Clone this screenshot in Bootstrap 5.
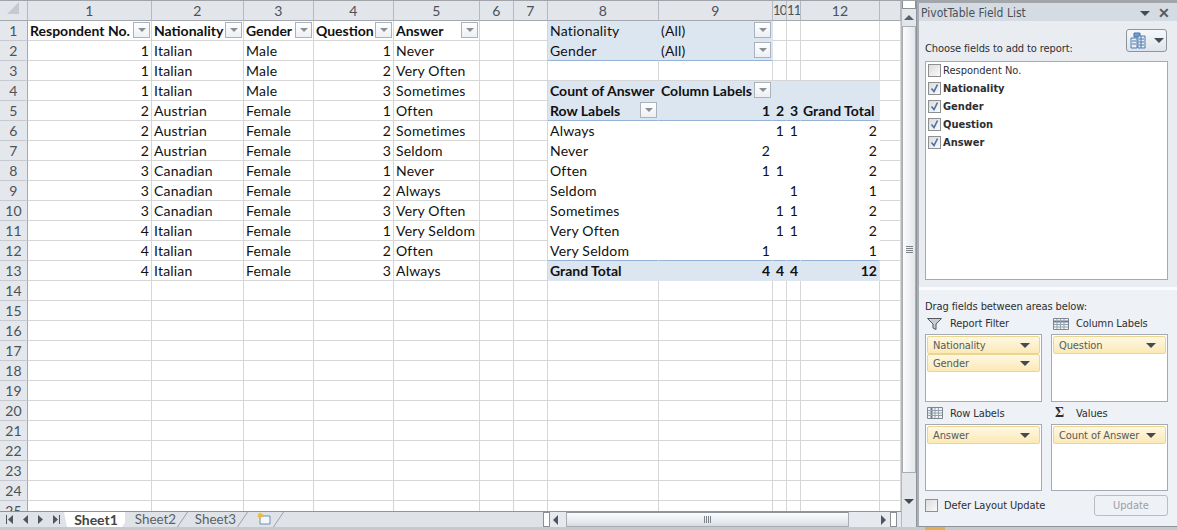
<!DOCTYPE html>
<html lang="en"><head><meta charset="utf-8"><title>PivotTable</title>
<link href="https://cdn.jsdelivr.net/npm/bootstrap@5.3.0/dist/css/bootstrap.min.css" rel="stylesheet">
<style>
html,body{width:1177px;height:530px;overflow:hidden;margin:0;background:#fff}
.xl-main{height:527px}
.xl-left{width:901px}
.xl-gridwrap{height:511px;overflow:hidden;border-top:1px solid #a0a4a8}
.xl-grid{table-layout:fixed;width:901px;border-collapse:separate;border-spacing:0;font:14px/19px Lato,"Liberation Sans",sans-serif;color:#111}
.xl-grid td,.xl-grid th{height:20px;padding:0 2px;border-right:1px solid #d6d6d6;border-bottom:1px solid #d6d6d6;overflow:hidden;white-space:nowrap;vertical-align:top;letter-spacing:.2px}
.xl-grid td.fw-bold{letter-spacing:0}
.xl-grid thead th{height:20px;background:#e2e5ea;border-right-color:#b6bac0;border-bottom-color:#a4a9b0;color:#4b525a;font-weight:400;text-align:center}
.xl-grid thead th.hd-tight{padding:0;font-size:13px;letter-spacing:-.8px}
.xl-grid tbody th{background:#e4e7ec;border-right-color:#a4a9b0;border-bottom-color:#c6cad0;color:#4b525a;font-weight:400;text-align:center}
.xl-grid td.pv-blue{background:#dce6f1;border-color:#dce6f1}
.xl-grid td.pv-plain{border-color:#fff}
.xl-grid td.pv-line{border-bottom-color:#95b3d7}
.xl-grid td.pv-total{padding-right:5px}
.fbtn{width:17px;height:16px;margin:1px -1px 0 0;background:linear-gradient(#fff,#eceff3);border:1px solid #a9b2bd}
.fbtn::after{content:"";border-left:4px solid transparent;border-right:4px solid transparent;border-top:4px solid #8a8f96}
.xl-tabs{height:16px;background:#dfe3e8;border-top:1px solid #8f949a;font:13.4px/15px Lato,"Liberation Sans",sans-serif;color:#5a6068}
.tab-nav{width:64px;padding:0 4px 0 6px}
.sheet-tab{width:60px;height:15px;text-align:center;position:relative;flex:none;padding-left:1px}
.sheet-tab.is-on{background:#fff;font-size:14px;font-weight:700;color:#444;clip-path:polygon(0 0,68px 0,58px 100%,3px 100%);padding-left:3px}
.sheet-tab:not(.is-on)::after{content:"";position:absolute;right:2px;top:0;bottom:0;width:1px;background:#9a9fa6;transform:skewX(-34deg)}
.tab-first{width:61px}
.tab-end{width:36px}
.hbar{width:358px;margin-left:auto;height:15px;background:#e6e9ed;flex:none}
.splitbox{width:7px;height:15px;background:#fff;border:1px solid #8b9096;flex:none}
.hthumb{width:283px;height:15px;background:linear-gradient(#fafbfc,#e9ecf0 60%,#d8dce1);border:1px solid #a8adb3;border-top-color:#8f949a;margin-left:8px;flex:none}
.arrow-gap{margin-left:3px}
.grip-h{width:7px;height:7px;background:repeating-linear-gradient(90deg,#7d8288 0 1px,transparent 1px 2px)}
.grip-v{width:7px;height:7px;background:repeating-linear-gradient(0deg,#7d8288 0 1px,transparent 1px 2px)}
.vbar{width:16px;background:#e3e6ea;border-left:1px solid #b5b9be;border-right:1px solid #8f949a;border-top:1px solid #a0a4a8}
.vsplit{height:8px;background:#fff;border:1px solid #8b9096;border-top:0}
.varrow{height:16px}
.vthumb{height:447px;margin:1px 0 0;background:linear-gradient(90deg,#fafbfc,#e4e7eb);border:1px solid #a8adb3}
.vlow{padding-top:26px}
.tri-up{border-left:5px solid transparent;border-right:5px solid transparent;border-bottom:5px solid #5b6068}
.tri-dn{border-left:5px solid transparent;border-right:5px solid transparent;border-top:5px solid #444a52}
.tri-l{border-top:5px solid transparent;border-bottom:5px solid transparent;border-right:5px solid #505660}
.tri-r{border-top:5px solid transparent;border-bottom:5px solid transparent;border-left:5px solid #505660}
.pf-panel{width:260px;background:#e9edf2;border-left:2px solid #a9aeb4;border-top:3px solid #a2a6ab;border-bottom:1px solid #8f949a;font:11px/15px "DejaVu Sans Condensed","DejaVu Sans",sans-serif;font-stretch:condensed;color:#2c2f33}
.pf-title{height:18px;padding:2px 7px 0 2px;background:#d5dbe3;font-size:12px;color:#4a5058}
.pf-x{font:700 14px/14px "Liberation Sans",sans-serif;color:#555b63}
.pf-top{height:266px;padding:0 9px 0 6px}
.pf-head{height:40px;padding-top:8px;letter-spacing:-.1px}
.pf-tool{width:41px;height:23px;margin-right:1px;background:linear-gradient(#f6f8fb,#dfe4ea);border:1px solid #8f959c;border-radius:3px}
.pf-list{height:219px;background:#fff;border:1px solid #a5abb2;padding-left:2px}
.pf-row{height:18px;gap:2px}
.pf-row:first-child{margin-top:-1px}
.pf-check{width:13px;height:13px;border:1px solid #8e8f8f;background:linear-gradient(135deg,#dcdcdc,#fafafa);flex:none}
.pf-div{height:3px;background:#fbfcfd}
.pf-low{padding:9px 9px 0 6px;background:#eef1f5;letter-spacing:-.1px}
.pf-areas{display:grid;grid-template-columns:117px 117px;column-gap:9px}
.pf-lab{height:19px;padding-left:2px;margin-bottom:1px}
.pf-lab.is-low{height:22px;margin-bottom:0}
.pf-lab i{width:23px;flex:none;font-style:normal}
.pf-lab i.sigma{font:700 14px/14px "Liberation Serif",serif;padding-left:2px}
.pf-drop{height:68px;background:#fff;border:1px solid #a5abb2;padding:1px}
.pf-drop.is-low{height:67px}
.pf-item{height:18px;padding:0 9px 0 5px;background:linear-gradient(#fef8e4,#fbe9b6);border:1px solid #ecd590;border-radius:2px;color:#555a60;white-space:nowrap}
.pf-foot{height:25px;padding-top:4px;gap:6px}
.pf-update{width:74px;height:21px;padding:0;font:inherit;color:#9b9fa4;background:#eef1f5;border:1px solid #b9bdc2;border-radius:3px;line-height:19px}
.pf-defer{gap:6px}
.xl-strip{height:3px;background:#c6cace}
.xl-strip span{width:20px;background:#e0b050;margin-left:925px}
</style></head>
<body>
<div class="xl-main d-flex">
<div class="xl-left d-flex flex-column">
<div class="xl-gridwrap">
<table class="xl-grid"><colgroup><col style="width:28px"><col style="width:124px"><col style="width:92px"><col style="width:70px"><col style="width:80px"><col style="width:86px"><col style="width:34px"><col style="width:34px"><col style="width:111px"><col style="width:114px"><col style="width:14px"><col style="width:14px"><col style="width:79px"><col style="width:21px"></colgroup>
<thead><tr><th><svg width="14" height="14" class="d-block ms-1" viewBox="0 0 14 14"><path d="M13 1V13H1Z" fill="#c6cad0"/></svg></th><th>1</th><th>2</th><th>3</th><th>4</th><th>5</th><th>6</th><th>7</th><th>8</th><th>9</th><th class="hd-tight">10</th><th class="hd-tight">11</th><th>12</th><th></th></tr></thead>
<tbody>
<tr><th>1</th><td class="fw-bold"><span class="fbtn float-end d-flex align-items-center justify-content-center"></span>Respondent No.</td><td class="fw-bold"><span class="fbtn float-end d-flex align-items-center justify-content-center"></span>Nationality</td><td class="fw-bold"><span class="fbtn float-end d-flex align-items-center justify-content-center"></span>Gender</td><td class="fw-bold"><span class="fbtn float-end d-flex align-items-center justify-content-center"></span>Question</td><td class="fw-bold"><span class="fbtn float-end d-flex align-items-center justify-content-center"></span>Answer</td><td></td><td></td><td class="pv-blue">Nationality</td><td class="pv-blue"><span class="fbtn float-end d-flex align-items-center justify-content-center"></span>(All)</td><td></td><td></td><td></td><td></td></tr>
<tr><th>2</th><td class="text-end">1</td><td>Italian</td><td>Male</td><td class="text-end">1</td><td>Never</td><td></td><td></td><td class="pv-blue pv-line">Gender</td><td class="pv-blue pv-line"><span class="fbtn float-end d-flex align-items-center justify-content-center"></span>(All)</td><td></td><td></td><td></td><td></td></tr>
<tr><th>3</th><td class="text-end">1</td><td>Italian</td><td>Male</td><td class="text-end">2</td><td>Very Often</td><td></td><td></td><td></td><td></td><td></td><td></td><td></td><td></td></tr>
<tr><th>4</th><td class="text-end">1</td><td>Italian</td><td>Male</td><td class="text-end">3</td><td>Sometimes</td><td></td><td></td><td class="pv-blue fw-bold">Count of Answer</td><td class="pv-blue fw-bold"><span class="fbtn float-end d-flex align-items-center justify-content-center"></span>Column Labels</td><td class="pv-blue"></td><td class="pv-blue"></td><td class="pv-blue"></td><td></td></tr>
<tr><th>5</th><td class="text-end">2</td><td>Austrian</td><td>Female</td><td class="text-end">1</td><td>Often</td><td></td><td></td><td class="pv-blue pv-line fw-bold"><span class="fbtn float-end d-flex align-items-center justify-content-center"></span>Row Labels</td><td class="pv-blue pv-line fw-bold text-end">1</td><td class="pv-blue pv-line fw-bold text-end">2</td><td class="pv-blue pv-line fw-bold text-end">3</td><td class="pv-blue pv-line fw-bold text-end pv-total">Grand Total</td><td></td></tr>
<tr><th>6</th><td class="text-end">2</td><td>Austrian</td><td>Female</td><td class="text-end">2</td><td>Sometimes</td><td></td><td></td><td class="pv-plain">Always</td><td class="pv-plain"></td><td class="pv-plain text-end">1</td><td class="pv-plain text-end">1</td><td class="pv-plain text-end">2</td><td></td></tr>
<tr><th>7</th><td class="text-end">2</td><td>Austrian</td><td>Female</td><td class="text-end">3</td><td>Seldom</td><td></td><td></td><td class="pv-plain">Never</td><td class="pv-plain text-end">2</td><td class="pv-plain"></td><td class="pv-plain"></td><td class="pv-plain text-end">2</td><td></td></tr>
<tr><th>8</th><td class="text-end">3</td><td>Canadian</td><td>Female</td><td class="text-end">1</td><td>Never</td><td></td><td></td><td class="pv-plain">Often</td><td class="pv-plain text-end">1</td><td class="pv-plain text-end">1</td><td class="pv-plain"></td><td class="pv-plain text-end">2</td><td></td></tr>
<tr><th>9</th><td class="text-end">3</td><td>Canadian</td><td>Female</td><td class="text-end">2</td><td>Always</td><td></td><td></td><td class="pv-plain">Seldom</td><td class="pv-plain"></td><td class="pv-plain"></td><td class="pv-plain text-end">1</td><td class="pv-plain text-end">1</td><td></td></tr>
<tr><th>10</th><td class="text-end">3</td><td>Canadian</td><td>Female</td><td class="text-end">3</td><td>Very Often</td><td></td><td></td><td class="pv-plain">Sometimes</td><td class="pv-plain"></td><td class="pv-plain text-end">1</td><td class="pv-plain text-end">1</td><td class="pv-plain text-end">2</td><td></td></tr>
<tr><th>11</th><td class="text-end">4</td><td>Italian</td><td>Female</td><td class="text-end">1</td><td>Very Seldom</td><td></td><td></td><td class="pv-plain">Very Often</td><td class="pv-plain"></td><td class="pv-plain text-end">1</td><td class="pv-plain text-end">1</td><td class="pv-plain text-end">2</td><td></td></tr>
<tr><th>12</th><td class="text-end">4</td><td>Italian</td><td>Female</td><td class="text-end">2</td><td>Often</td><td></td><td></td><td class="pv-plain pv-line">Very Seldom</td><td class="pv-plain pv-line text-end">1</td><td class="pv-plain pv-line"></td><td class="pv-plain pv-line"></td><td class="pv-plain pv-line text-end">1</td><td></td></tr>
<tr><th>13</th><td class="text-end">4</td><td>Italian</td><td>Female</td><td class="text-end">3</td><td>Always</td><td></td><td></td><td class="pv-blue fw-bold">Grand Total</td><td class="pv-blue fw-bold text-end">4</td><td class="pv-blue fw-bold text-end">4</td><td class="pv-blue fw-bold text-end">4</td><td class="pv-blue fw-bold text-end">12</td><td></td></tr>
<tr><th>14</th><td></td><td></td><td></td><td></td><td></td><td></td><td></td><td></td><td></td><td></td><td></td><td></td><td></td></tr>
<tr><th>15</th><td></td><td></td><td></td><td></td><td></td><td></td><td></td><td></td><td></td><td></td><td></td><td></td><td></td></tr>
<tr><th>16</th><td></td><td></td><td></td><td></td><td></td><td></td><td></td><td></td><td></td><td></td><td></td><td></td><td></td></tr>
<tr><th>17</th><td></td><td></td><td></td><td></td><td></td><td></td><td></td><td></td><td></td><td></td><td></td><td></td><td></td></tr>
<tr><th>18</th><td></td><td></td><td></td><td></td><td></td><td></td><td></td><td></td><td></td><td></td><td></td><td></td><td></td></tr>
<tr><th>19</th><td></td><td></td><td></td><td></td><td></td><td></td><td></td><td></td><td></td><td></td><td></td><td></td><td></td></tr>
<tr><th>20</th><td></td><td></td><td></td><td></td><td></td><td></td><td></td><td></td><td></td><td></td><td></td><td></td><td></td></tr>
<tr><th>21</th><td></td><td></td><td></td><td></td><td></td><td></td><td></td><td></td><td></td><td></td><td></td><td></td><td></td></tr>
<tr><th>22</th><td></td><td></td><td></td><td></td><td></td><td></td><td></td><td></td><td></td><td></td><td></td><td></td><td></td></tr>
<tr><th>23</th><td></td><td></td><td></td><td></td><td></td><td></td><td></td><td></td><td></td><td></td><td></td><td></td><td></td></tr>
<tr><th>24</th><td></td><td></td><td></td><td></td><td></td><td></td><td></td><td></td><td></td><td></td><td></td><td></td><td></td></tr>
<tr><th>25</th><td></td><td></td><td></td><td></td><td></td><td></td><td></td><td></td><td></td><td></td><td></td><td></td><td></td></tr>
</tbody></table>
</div>
<div class="xl-tabs d-flex align-items-center">
<div class="tab-nav d-flex justify-content-between align-items-center">
<svg width="7" height="9" viewBox="0 0 7 9"><path d="M0 0h1v9H0zM7 0v9L2 4.500z" fill="#505660"/></svg>
<svg width="5" height="9" viewBox="0 0 5 9"><path d="M5 0v9L0 4.500z" fill="#505660"/></svg>
<svg width="5" height="9" viewBox="0 0 5 9"><path d="M0 0v9l5-4.500z" fill="#505660"/></svg>
<svg width="7" height="9" viewBox="0 0 7 9"><path d="M6 0h1v9H6zM0 0v9l5-4.500z" fill="#505660"/></svg>
</div>
<div class="sheet-tab tab-first is-on">Sheet1</div>
<div class="sheet-tab">Sheet2</div>
<div class="sheet-tab">Sheet3</div>
<div class="sheet-tab tab-end"><svg width="16" height="14" viewBox="0 0 16 14" class="d-block mx-auto"><path d="M4 4h10v8H4z" fill="#f3f6fa" stroke="#6f8fb3"/><path d="M4 0l1.200 2 2.300-.6L6 3.300l1.800 1.500-2.400.2L4.800 7 3.600 5 1 5l1.500-1.700L1.500 1.300l2 .6z" fill="#eab93f"/></svg></div>
<div class="hbar d-flex align-items-center">
<span class="splitbox"></span><span class="tri-l arrow-gap"></span>
<div class="hthumb d-flex align-items-center justify-content-center"><span class="grip-h"></span></div>
<span class="tri-r ms-auto me-1"></span><span class="splitbox me-1"></span>
</div>
</div>
</div>
<div class="vbar d-flex flex-column">
<div class="vsplit"></div>
<div class="varrow d-flex align-items-center justify-content-center"><span class="tri-up"></span></div>
<div class="vthumb d-flex align-items-center justify-content-center"><span class="grip-v"></span></div>
<div class="vlow flex-grow-1 d-flex align-items-start justify-content-center"><span class="tri-dn"></span></div>
</div>
<aside class="pf-panel d-flex flex-column">
<div class="pf-title d-flex align-items-center justify-content-between"><span>PivotTable Field List</span><span class="d-flex align-items-center gap-2"><span class="tri-dn"></span><span class="pf-x">✕</span></span></div>
<div class="pf-top">
<div class="pf-head d-flex justify-content-between align-items-start"><span class="pt-2 mt-1">Choose fields to add to report:</span>
<span class="pf-tool d-flex align-items-center justify-content-center gap-2"><svg width="16" height="17" viewBox="0 0 16 17"><path d="M4 1h6v4H4z" fill="#6f9fd8" stroke="#4a74a8"/><path d="M1 6h6v10H1zM8 4h7v12H8z" fill="#e4eefa" stroke="#4f78a8"/><path d="M2 9h4M2 12h4M9 7h5M9 10h5M9 13h5M11 4v12" stroke="#4f78a8"/></svg><span class="tri-dn"></span></span></div>
<div class="pf-list">
<div class="pf-row d-flex align-items-center"><span class="pf-check"></span><span>Respondent No.</span></div>
<div class="pf-row d-flex align-items-center fw-bold"><span class="pf-check"><svg width="11" height="11" viewBox="0 0 11 11" class="d-block"><path d="M2.500 5.500l2.500 3 3.500-7" fill="none" stroke="#4a6fa8" stroke-width="1.600"/></svg></span><span>Nationality</span></div>
<div class="pf-row d-flex align-items-center fw-bold"><span class="pf-check"><svg width="11" height="11" viewBox="0 0 11 11" class="d-block"><path d="M2.500 5.500l2.500 3 3.500-7" fill="none" stroke="#4a6fa8" stroke-width="1.600"/></svg></span><span>Gender</span></div>
<div class="pf-row d-flex align-items-center fw-bold"><span class="pf-check"><svg width="11" height="11" viewBox="0 0 11 11" class="d-block"><path d="M2.500 5.500l2.500 3 3.500-7" fill="none" stroke="#4a6fa8" stroke-width="1.600"/></svg></span><span>Question</span></div>
<div class="pf-row d-flex align-items-center fw-bold"><span class="pf-check"><svg width="11" height="11" viewBox="0 0 11 11" class="d-block"><path d="M2.500 5.500l2.500 3 3.500-7" fill="none" stroke="#4a6fa8" stroke-width="1.600"/></svg></span><span>Answer</span></div>
</div>
</div>
<div class="pf-div"></div>
<div class="pf-low flex-grow-1">
<div>Drag fields between areas below:</div>
<div class="pf-areas">
<div><div class="pf-lab d-flex align-items-center"><i><svg width="15" height="12" viewBox="0 0 15 12" class="d-block"><path d="M.5.500h14L9 6v5.500L6 10V6z" fill="#c9ccd0" stroke="#55595e"/></svg></i>Report Filter</div>
<div class="pf-drop"><div class="pf-item d-flex align-items-center justify-content-between"><span>Nationality</span><span class="tri-dn"></span></div><div class="pf-item d-flex align-items-center justify-content-between"><span>Gender</span><span class="tri-dn"></span></div></div></div>
<div><div class="pf-lab d-flex align-items-center"><i><svg width="16" height="12" viewBox="0 0 16 12" class="d-block"><path d="M.5.500h15v11H.500z" fill="#f6f3e6" stroke="#7d8793"/><path d="M.5 3.500h15" stroke="#6a7d95" stroke-width="2"/><path d="M4 1v10M7.500 1v10M11 1v10M1 6.500h14M1 9h14" stroke="#93a2b5"/></svg></i>Column Labels</div>
<div class="pf-drop"><div class="pf-item d-flex align-items-center justify-content-between"><span>Question</span><span class="tri-dn"></span></div></div></div>
<div><div class="pf-lab is-low d-flex align-items-center"><i><svg width="16" height="12" viewBox="0 0 16 12" class="d-block"><path d="M.5.500h15v11H.500z" fill="#f6f3e6" stroke="#7d8793"/><path d="M4.500 1v10" stroke="#6a7d95" stroke-width="2"/><path d="M8 1v10M11.500 1v10M1 3.500h14M1 6h14M1 8.500h14" stroke="#93a2b5"/></svg></i>Row Labels</div>
<div class="pf-drop is-low"><div class="pf-item d-flex align-items-center justify-content-between"><span>Answer</span><span class="tri-dn"></span></div></div></div>
<div><div class="pf-lab is-low d-flex align-items-center"><i class="sigma">Σ</i>Values</div>
<div class="pf-drop is-low"><div class="pf-item d-flex align-items-center justify-content-between"><span>Count of Answer</span><span class="tri-dn"></span></div></div></div>
</div>
<div class="pf-foot d-flex justify-content-between align-items-center"><span class="pf-defer d-flex align-items-center"><span class="pf-check"></span>Defer Layout Update</span><button type="button" class="pf-update" disabled>Update</button></div>
</div>
</aside>
</div>
<div class="xl-strip d-flex"><span></span></div>
<script src="https://cdn.jsdelivr.net/npm/bootstrap@5.3.0/dist/js/bootstrap.bundle.min.js"></script>
</body></html>
